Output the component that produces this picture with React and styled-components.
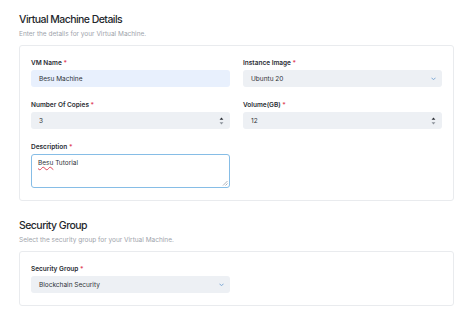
import React from "react";
import styled, { createGlobalStyle } from "styled-components";

const GlobalStyle = createGlobalStyle`
  html, body {
    margin: 0;
    padding: 0;
    background: #ffffff;
  }
  body {
    font-family: Inter, "Noto Sans", sans-serif;
    color: #23262b;
  }
`;

const Chevron = () => (
  <StyledIcon>
    <svg width="5" height="4" viewBox="0 0 10 7" fill="none">
      <path d="M1.5 1.5l3.5 3.5 3.5-3.5" stroke="#7aa6d4" strokeWidth="2" strokeLinecap="round" strokeLinejoin="round" />
    </svg>
  </StyledIcon>
);

const Spinner = () => (
  <StyledIcon>
    <svg width="5" height="10" viewBox="0 0 6 12">
      <path d="M0.7 4.6L3 1.8 5.3 4.6z" fill="#2b2f36" />
      <path d="M0.7 7.4L3 10.2 5.3 7.4z" fill="#8a9099" />
    </svg>
  </StyledIcon>
);

const Field = ({ label, children }) => (
  <StyledField>
    <StyledLabel>
      {label} <span>*</span>
    </StyledLabel>
    {children}
  </StyledField>
);

const App = () => {
  return (
    <StyledRoot>
      <GlobalStyle />
      <StyledSection>
        <h1>Virtual Machine Details</h1>
        <p>Enter the details for your Virtual Machine.</p>
        <StyledCard>
          <StyledGrid>
            <Field label="VM Name">
              <StyledInputBox $autofill>
                <StyledValue>Besu Machine</StyledValue>
              </StyledInputBox>
            </Field>
            <Field label="Instance Image">
              <StyledInputBox>
                <StyledValue>Ubuntu 20</StyledValue>
                <Chevron />
              </StyledInputBox>
            </Field>
            <Field label="Number Of Copies">
              <StyledInputBox>
                <StyledValue>3</StyledValue>
                <Spinner />
              </StyledInputBox>
            </Field>
            <Field label="Volume(GB)">
              <StyledInputBox>
                <StyledValue>12</StyledValue>
                <Spinner />
              </StyledInputBox>
            </Field>
            <Field label="Description">
              <StyledTextArea>
                <span>Besu</span> Tutorial
                <StyledGrip>
                  <svg width="6" height="6" viewBox="0 0 6 6">
                    <path d="M5.5 1L1 5.5M5.5 3.5L3.5 5.5" stroke="#9aa0a8" strokeWidth="0.8" />
                  </svg>
                </StyledGrip>
              </StyledTextArea>
            </Field>
          </StyledGrid>
        </StyledCard>
      </StyledSection>
      <StyledSection>
        <h1>Security Group</h1>
        <p>Select the security group for your Virtual Machine.</p>
        <StyledCard>
          <StyledGrid>
            <Field label="Security Group">
              <StyledInputBox>
                <StyledValue>Blockchain Security</StyledValue>
                <Chevron />
              </StyledInputBox>
            </Field>
          </StyledGrid>
        </StyledCard>
      </StyledSection>
    </StyledRoot>
  );
};

export default App;

const StyledRoot = styled.div`
  width: 474px;
  height: 315px;
  padding: 12px 20px 0 19px;
  box-sizing: border-box;
  display: flex;
  flex-direction: column;
  gap: 17px;
  overflow: hidden;
`;

const StyledSection = styled.section`
  display: flex;
  flex-direction: column;
  & > h1 {
    margin: 0;
    font-size: 10.5px;
    line-height: 16px;
    font-weight: 500;
    letter-spacing: -0.55px;
    color: #24272c;
  }
  & > p {
    margin: 1px 0 6px;
    font-size: 6.5px;
    line-height: 10px;
    color: #9ea3ab;
  }
`;

const StyledCard = styled.div`
  border: 1px solid #e9ebee;
  border-radius: 3px;
  padding: 12px 11px 12px;
`;

const StyledGrid = styled.div`
  display: grid;
  grid-template-columns: 1fr 1fr;
  column-gap: 13px;
  row-gap: 13px;
`;

const StyledField = styled.div`
  display: flex;
  flex-direction: column;
`;

const StyledLabel = styled.label`
  font-size: 6.5px;
  line-height: 10px;
  font-weight: 600;
  color: #2a2d33;
  margin-bottom: 2px;
  & > span {
    color: #e0455a;
  }
`;

const StyledInputBox = styled.div`
  height: 17px;
  border-radius: 3px;
  background: ${({ $autofill }) => ($autofill ? "#e8f0fd" : "#edf0f4")};
  display: flex;
  align-items: center;
  justify-content: space-between;
  padding: 0 8px;
`;

const StyledValue = styled.span`
  font-size: 6.5px;
  color: #2d3037;
`;

const StyledIcon = styled.span`
  display: flex;
  align-items: center;
  margin-right: -2px;
`;

const StyledTextArea = styled.div`
  position: relative;
  height: 34px;
  box-sizing: border-box;
  border: 1px solid #86bde6;
  border-radius: 3px;
  background: #ffffff;
  padding: 4px 6px;
  font-size: 6.5px;
  line-height: 9px;
  color: #2d3037;
  & > span {
    text-decoration: underline wavy #e0455a;
    text-decoration-thickness: 0.5px;
    text-underline-offset: 1px;
  }
`;

const StyledGrip = styled.span`
  position: absolute;
  right: 1px;
  bottom: 1px;
  display: flex;
`;
